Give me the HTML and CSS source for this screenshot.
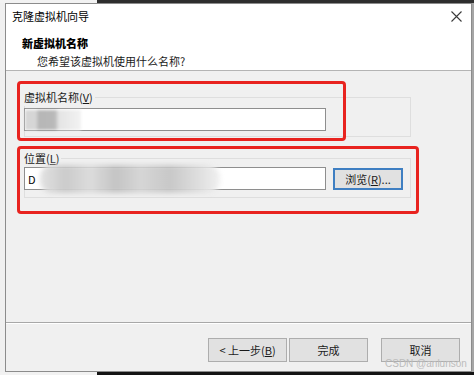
FILE: index.html
```html
<!DOCTYPE html>
<html lang="zh-CN">
<head>
    <meta charset="UTF-8">
    <title>克隆虚拟机向导</title>
    <link rel="stylesheet" href="styles.css">
</head>
<body>
    <div class="screen">
        <div class="strip strip-top"><div class="strip-l"></div><div class="strip-r"></div></div>
        <div class="middle">
            <div class="gutter-left"></div>
            <div class="window">
                <div class="titlebar">
                    <span class="title">克隆虚拟机向导</span>
                    <svg class="close" width="11" height="11" viewBox="0 0 11 11">
                        <path d="M0.5 0.5 L10.5 10.5 M10.5 0.5 L0.5 10.5" stroke="#3a3a3a" stroke-width="1.1" fill="none"/>
                    </svg>
                </div>
                <div class="header">
                    <h2>新虚拟机名称</h2>
                    <p>您希望该虚拟机使用什么名称?</p>
                </div>
                <div class="content">
                    <fieldset class="group">
                        <legend>虚拟机名称(<u>V</u>)</legend>
                        <div class="textbox name-box">
                            <span class="redact redact-name"></span>
                        </div>
                    </fieldset>
                    <fieldset class="group group-location">
                        <legend>位置(<u>L</u>)</legend>
                        <div class="row">
                            <div class="textbox">
                                <span class="drive">D</span>
                                <span class="redact redact-path"></span>
                            </div>
                            <button class="btn btn-browse">浏览(<u>R</u>)...</button>
                        </div>
                    </fieldset>
                    <div class="mark mark-name"></div>
                    <div class="mark mark-location"></div>
                </div>
                <div class="footer">
                    <button class="btn">&lt;&nbsp;上一步(<u>B</u>)</button>
                    <button class="btn">完成</button>
                    <button class="btn btn-cancel">取消</button>
                </div>
            </div>
            <div class="gutter-right"></div>
        </div>
        <div class="strip strip-bottom"><div class="strip-l"></div><div class="strip-r"></div></div>
        <div class="watermark">CSDN @anlunson</div>
    </div>
</body>
</html>
```

FILE: styles.css
```css
body {
    margin: 0;
    background-color: #f0f0f0;
    font-family: "Noto Sans CJK SC", "Noto Sans", sans-serif;
    font-size: 11px;
    color: #1a1a1a;
}
.screen {
    position: relative;
    width: 474px;
    height: 375px;
    display: flex;
    flex-direction: column;
    overflow: hidden;
}
.strip {
    display: flex;
    height: 3px;
}
.strip-l {
    width: 97px;
    background-color: #f2f2f2;
}
.strip-r {
    flex: 1;
}
.strip-top .strip-r {
    background-color: #2e2e2e;
}
.strip-bottom .strip-r {
    background-color: #141414;
}
.middle {
    display: flex;
    height: 369px;
}
.gutter-left {
    width: 5px;
    background-color: #f0f0f0;
}
.gutter-right {
    flex: 1;
    background-color: #a6a6a6;
}
.window {
    width: 467px;
    box-sizing: border-box;
    border: 1px solid #8c8c8c;
    background-color: #f0f0f0;
    display: flex;
    flex-direction: column;
}
.titlebar {
    height: 24px;
    background-color: #ffffff;
    display: flex;
    align-items: center;
    justify-content: space-between;
    padding: 0 9px 0 6px;
}
.title {
    color: #000000;
}
.header {
    background-color: #ffffff;
    padding: 6px 0 0 16px;
    border-bottom: 1px solid #b4b4b4;
}
.header h2 {
    margin: 0;
    font-size: 11px;
    font-weight: 900;
    line-height: 18px;
    color: #000000;
}
.header p {
    margin: 0 0 0 15px;
    line-height: 18px;
}
.content {
    flex: 1;
    position: relative;
    padding: 17px 0 0 18px;
}
.group {
    width: 387px;
    box-sizing: border-box;
    margin: 0;
    padding: 0 0 5px 0;
    border: 1px solid #dedede;
    min-width: 0;
}
.group legend {
    padding: 0 2px 0 0;
    margin-left: -1px;
    line-height: 18px;
}
.group-location {
    margin-top: 12px;
    padding-bottom: 7px;
}
.name-box {
    margin-top: 2px;
}
.row {
    display: flex;
    align-items: center;
    gap: 7px;
}
.textbox {
    width: 302px;
    height: 23px;
    box-sizing: border-box;
    border: 1px solid #8e8e8e;
    background-color: #ffffff;
    display: flex;
    align-items: center;
    padding-left: 3px;
    margin-left: -1px;
}
.drive {
    color: #000000;
}
.redact {
    display: block;
}
.redact-name {
    width: 56px;
    height: 20px;
    margin-left: -3px;
    filter: blur(1.5px);
    background: linear-gradient(90deg, #d6d6d6 0%, #d6d6d6 20%, #b6b6b6 24%, #b9b9b9 54%, #e4e4e4 60%, #f2f2f2 100%);
}
.redact-path {
    width: 180px;
    height: 28px;
    margin-left: 4px;
    border-radius: 12px;
    filter: blur(2.5px);
    background: linear-gradient(90deg, #e2e2e2 0%, #cbcbcb 14%, #dcdcdc 28%, #c4c4c4 42%, #d6d6d6 56%, #c8c8c8 72%, #dedede 88%, #f0f0f0 100%);
}
.btn {
    width: 79px;
    height: 24px;
    box-sizing: border-box;
    border: 1px solid #adadad;
    background-color: #e1e1e1;
    font-family: inherit;
    font-size: 11px;
    color: #1a1a1a;
    padding: 0;
}
.btn-browse {
    width: 70px;
    height: 22px;
    border: 2px solid #3f7fc2;
}
.footer {
    border-top: 1px solid #a8a8a8;
    box-shadow: inset 0 1px 0 #ffffff;
    height: 49px;
    box-sizing: border-box;
    padding: 15px 11px 0 0;
    display: flex;
    justify-content: flex-end;
    gap: 2px;
}
.btn-cancel {
    margin-left: 11px;
}
.mark {
    position: absolute;
    border: 3px solid #e8231f;
    border-radius: 4px;
    box-sizing: border-box;
}
.mark-name {
    left: 11px;
    top: 10px;
    width: 329px;
    height: 60px;
}
.mark-location {
    left: 11px;
    top: 75px;
    width: 402px;
    height: 68px;
}
.watermark {
    position: absolute;
    left: 385px;
    top: 357px;
    white-space: nowrap;
    font-family: "Liberation Sans", sans-serif;
    font-size: 10px;
    line-height: 14px;
    color: #bcbcbc;
}
```
